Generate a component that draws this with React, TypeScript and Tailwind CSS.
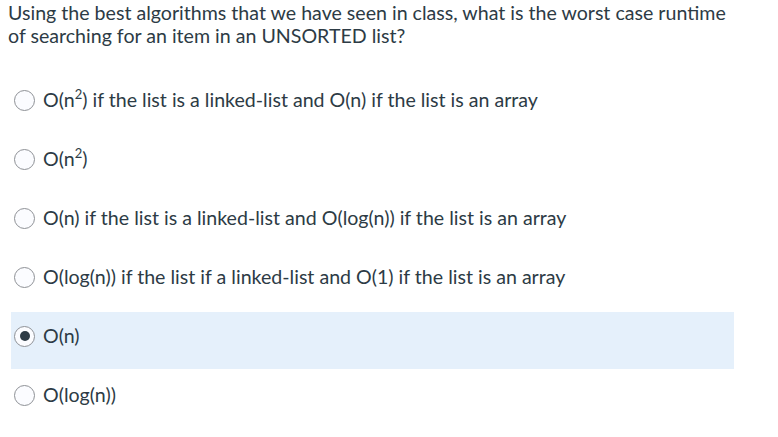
import React from "react";

const sup = <sup className="text-[13px] relative -top-[8px] align-baseline">2</sup>;

const options = [
  { label: <>O(n{sup}) if the list is a linked-list and O(n) if the list is an array</> },
  { label: <>O(n{sup})</> },
  { label: <>O(n) if the list is a linked-list and O(log(n)) if the list is an array</> },
  { label: <>O(log(n)) if the list if a linked-list and O(1) if the list is an array</> },
  { label: <>O(n)</>, selected: true },
  { label: <>O(log(n))</> },
];

export default function App() {
  return (
    <div
      className="w-[778px] h-[437px] bg-white text-[#2d3b45] overflow-hidden"
      style={{ fontFamily: "Lato, 'Open Sans', sans-serif" }}
    >
      <div className="pl-[8px] pt-[1px] text-[19.6px] leading-[23px] w-[740px]">
        Using the best algorithms that we have seen in class, what is the worst case runtime of searching for an item in an UNSORTED list?
      </div>
      <div className="mt-[29px] ml-[11px] w-[723px] flex flex-col gap-[2px]">
        {options.map((o, i) => (
          <div
            key={i}
            className={`h-[57px] flex items-center gap-[8px] pl-[3px] pb-[9px] ${o.selected ? "bg-[#e5f0fb]" : ""}`}
          >
            <span className="w-[21px] h-[21px] rounded-full border border-[#8e9196] bg-[#fbfcff] flex items-center justify-center shrink-0">
              {o.selected && <span className="w-[10px] h-[10px] rounded-full bg-[#2d3b45]" />}
            </span>
            <span className="text-[19.6px] leading-[22px]">{o.label}</span>
          </div>
        ))}
      </div>
    </div>
  );
}
